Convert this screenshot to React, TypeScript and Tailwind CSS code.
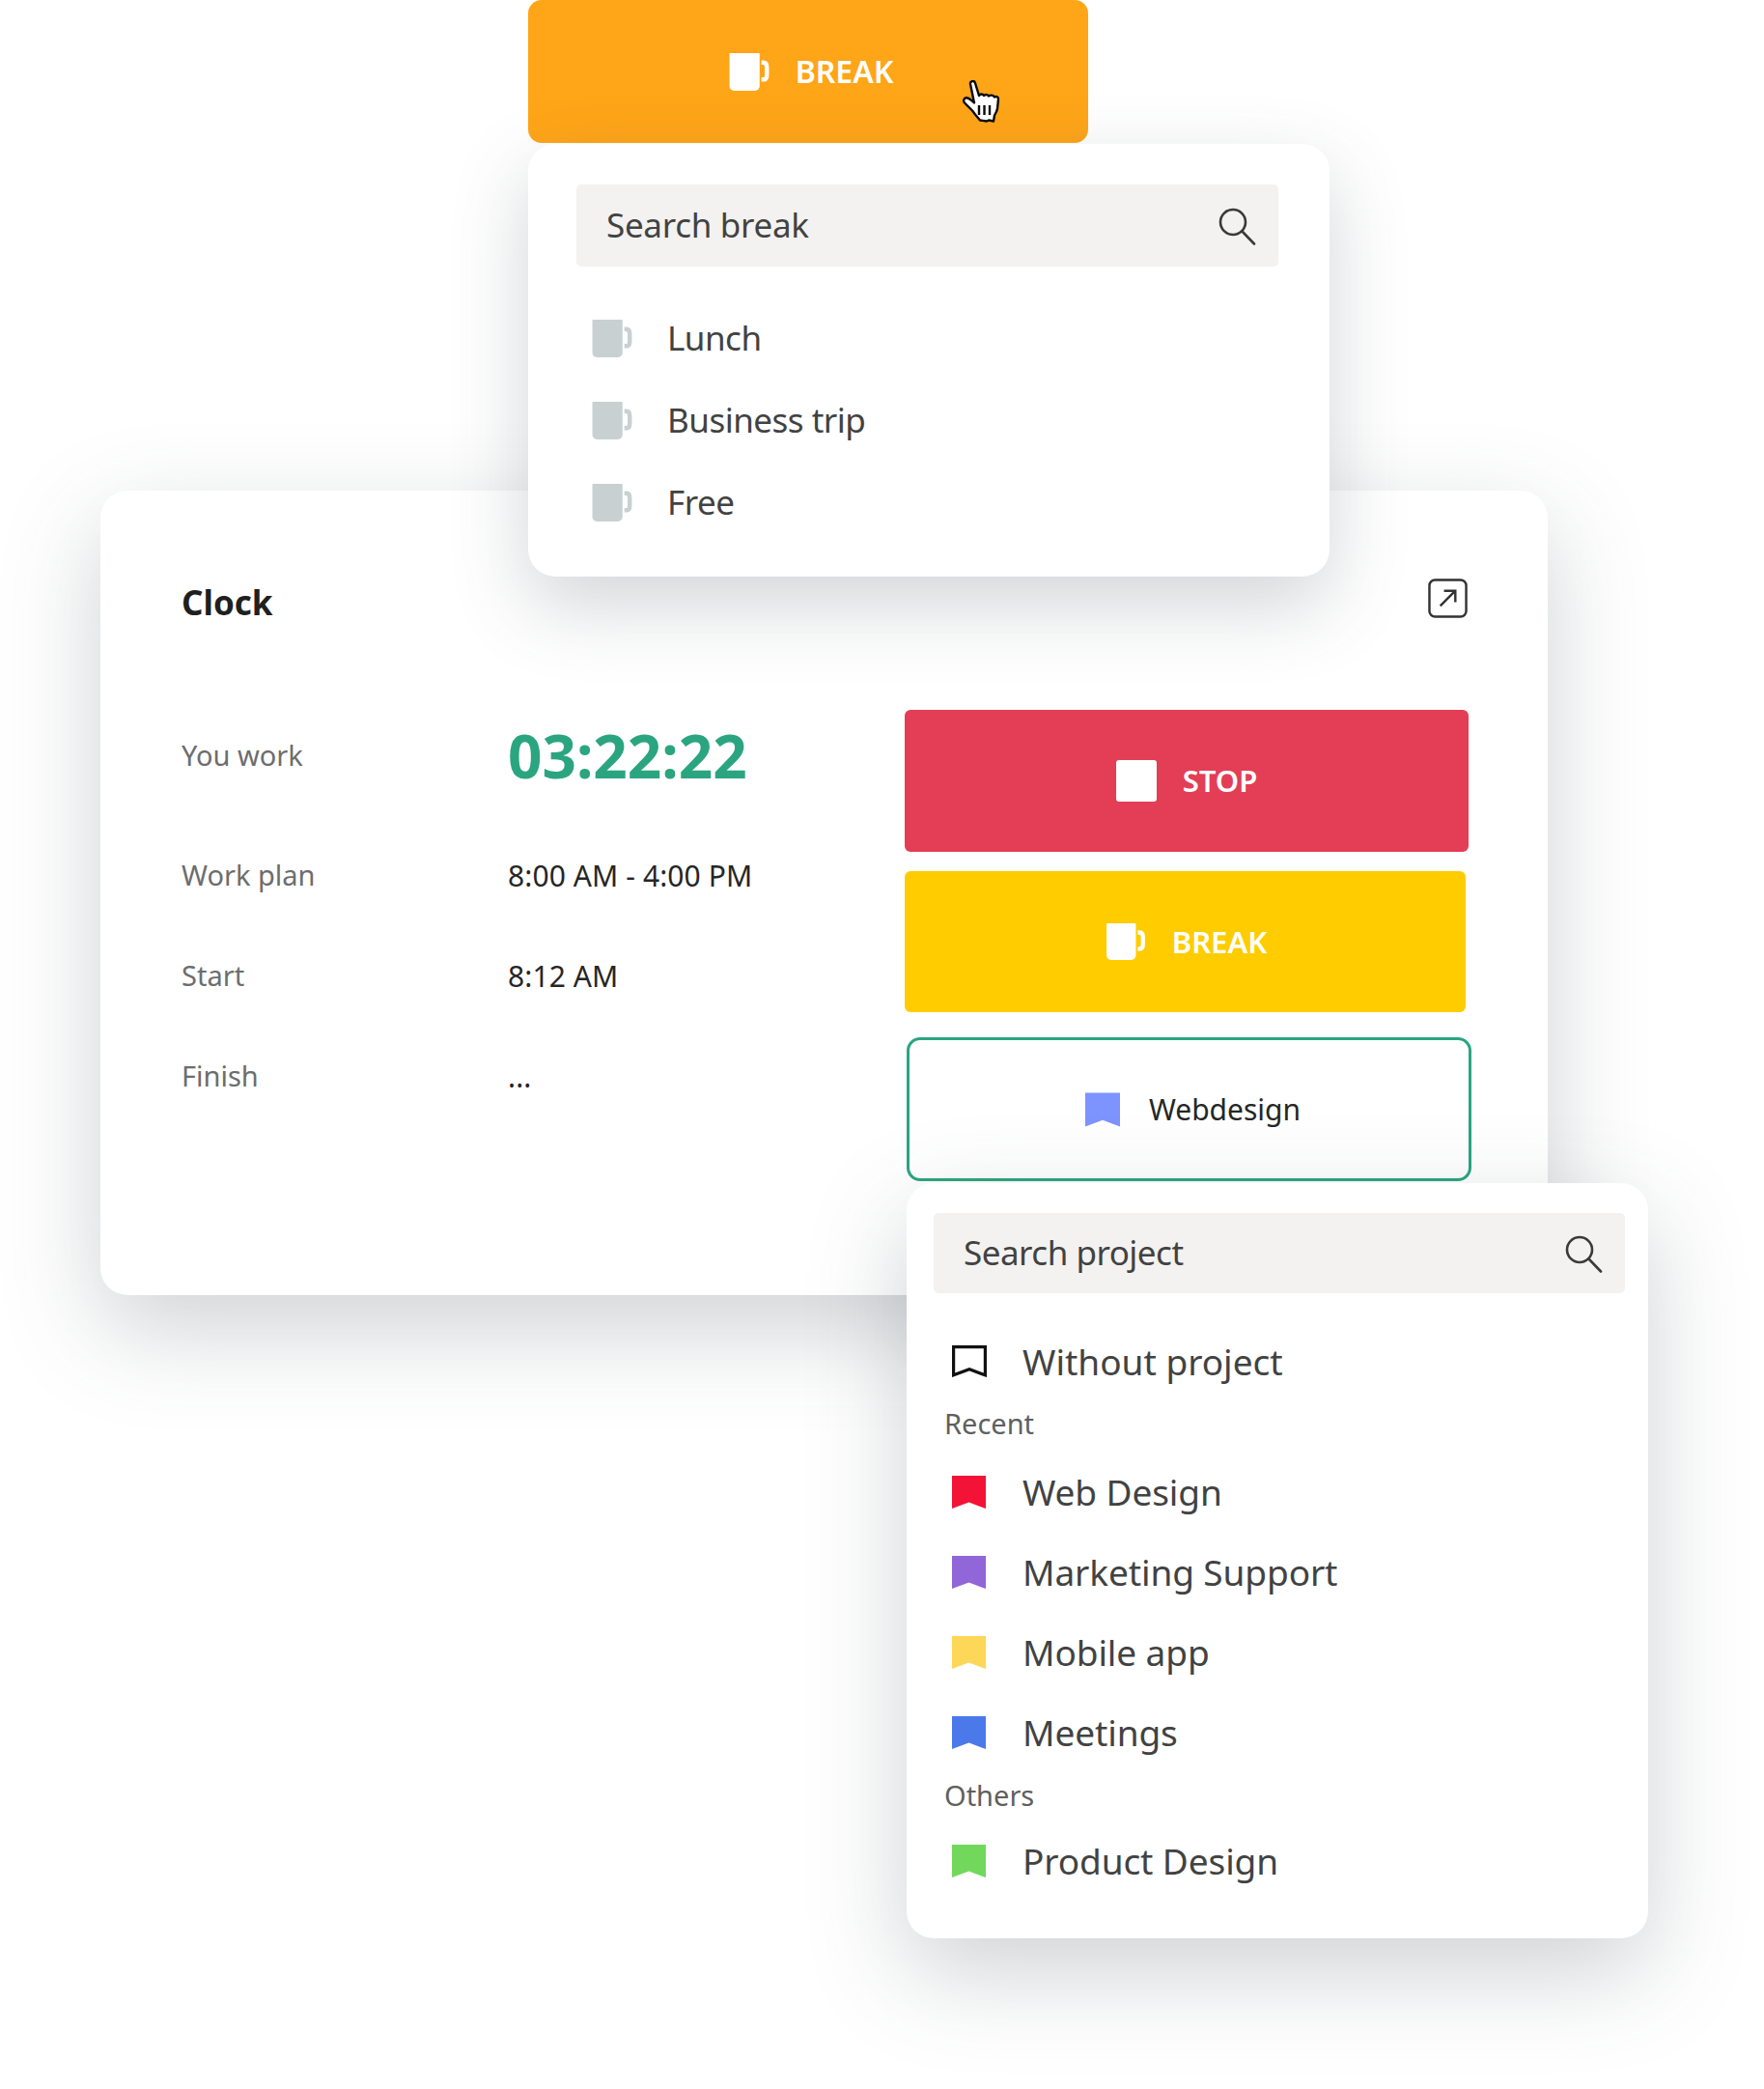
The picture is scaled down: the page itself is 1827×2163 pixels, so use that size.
import type { ReactNode } from "react";

const FONT = "font-['Noto_Sans','Open_Sans',sans-serif]";

function Mug({ className }: { className: string }) {
  return (
    <svg viewBox="0 0 42 40" className={className} fill="currentColor">
      <path d="M1 0h30a1 1 0 0 1 1 1v34a5 5 0 0 1-5 5H5a5 5 0 0 1-5-5V1a1 1 0 0 1 1-1z" />
      <path d="M34 10h2c2.500 0 3.700 2 3.700 5v8c0 3-1.200 5-3.700 5h-2" fill="none" stroke="currentColor" strokeWidth="4.500" />
    </svg>
  );
}

function Flag({ color, className = "w-[35px] h-[34px]" }: { color: string; className?: string }) {
  return (
    <svg viewBox="0 0 35 34" className={`${className} shrink-0`}>
      <path d="M0 0h35v34l-17.500-6.500L0 34z" fill={color} />
    </svg>
  );
}

function SearchGlyph() {
  return (
    <svg viewBox="0 0 40 40" className="w-10 h-10 text-[#3a3a3a]" fill="none" stroke="currentColor" strokeWidth="2.600">
      <circle cx="16" cy="16" r="13" />
      <path d="M25.500 25.500L38 38.500" strokeLinecap="round" />
    </svg>
  );
}

function Hand() {
  return (
    <svg viewBox="0 0 40 44" className="absolute left-[449px] top-[83px] w-10 h-11">
      <path
        d="M9 4c-.5-3 4-4.500 5-1l4 13c1-2 4-2 5 0 1-1.500 4-1.500 5 .5 1.500-1.500 5-1 6 1 1.500-1 4-.5 4 2l-1 10c-.5 3-2 5-3 7l-1 6-5-1-2 1-7-1-5-6-3-4-8-8c-2-2.500 0-6 3-5 2 .5 5 3 7 5z"
        fill="#fff"
        stroke="#0a0a0a"
        strokeWidth="2.400"
        strokeLinejoin="round"
      />
      <path d="M18 26v10M23.500 26v10M29 26v10" stroke="#0a0a0a" strokeWidth="2.400" />
    </svg>
  );
}

function Info({ label, children }: { label: string; children: ReactNode }) {
  return (
    <div className="flex h-[104px] items-center">
      <span className="w-[338px] text-[29px] text-[#6d6d6d]">{label}</span>
      <span className="text-[30px] tracking-[0.1px] text-[#262626]">{children}</span>
    </div>
  );
}

const breaks = ["Lunch", "Business trip", "Free"];
const recent = [
  { name: "Web Design", color: "#f31336" },
  { name: "Marketing Support", color: "#9066d8" },
  { name: "Mobile app", color: "#fdd758" },
  { name: "Meetings", color: "#4c79ea" },
];

function ProjectRow({ name, color }: { name: string; color: string }) {
  return (
    <div className="flex h-[83px] items-center pl-[19px]">
      <Flag color={color} />
      <span className="ml-[38px] text-[37px] tracking-[-0.1px] text-[#424242]">{name}</span>
    </div>
  );
}

export default function App() {
  return (
    <div className={`relative h-[2163px] w-[1827px] overflow-hidden bg-white ${FONT}`}>
      {/* clock */}
      <div className="absolute left-[104px] top-[508px] h-[833px] w-[1499px] rounded-[28px] bg-white pl-[84px] pt-[96px] shadow-[0_35px_100px_rgba(70,80,90,0.26)]">
        <div className="flex items-start justify-between pr-[83px]">
          <h1 className="text-[35px] font-bold leading-[40px] text-[#1f1f1f]">Clock</h1>
          <svg viewBox="0 0 42 42" className="-mt-[5px] h-[41px] w-[41px] text-[#333]" fill="none" stroke="currentColor" strokeWidth="2.500">
            <rect x="1.500" y="1.500" width="39" height="39" rx="6" />
            <path d="M13 29L29 13M17 13h12v12" />
          </svg>
        </div>
        <div className="mt-[91px] flex">
          <div className="-mt-[25px] w-[749px]">
            <div className="flex h-[144px] items-center">
              <span className="w-[338px] text-[29px] text-[#6d6d6d]">You work</span>
              <span className="text-[62px] font-bold text-[#2ba580]">03:22:22</span>
            </div>
            <Info label="Work plan">8:00 AM - 4:00 PM</Info>
            <Info label="Start">8:12 AM</Info>
            <Info label="Finish">...</Info>
          </div>
          <div className="flex flex-col">
            <button className="flex h-[147px] w-[584px] items-center justify-center gap-[27px] rounded-md bg-[#e33e55] text-[31px] font-semibold text-white">
              <span className="h-[43px] w-[42px] rounded-[3px] bg-white" />
              STOP
            </button>
            <button className="mt-[20px] flex h-[146px] w-[581px] items-center justify-center gap-[27px] rounded-md bg-[#ffcc00] pl-[2px] text-[31px] font-semibold text-white">
              <Mug className="h-[38px] w-[42px]" />
              BREAK
            </button>
            <button className="ml-[2px] mt-[26px] flex h-[149px] w-[585px] items-center justify-center gap-[30px] rounded-[14px] border-[3px] border-[#2ba580] bg-white pl-[8px] text-[30px] text-[#262626]">
              <Flag color="#7d93fe" className="h-[36px] w-[36px]" />
              Webdesign
            </button>
          </div>
        </div>
      </div>

      {/* break picker */}
      <div className="absolute left-[547px] top-0 w-[830px]">
        <button className="flex h-[148px] w-[580px] items-center justify-center gap-[27px] rounded-[14px] bg-[#ffa518] pl-[6px] text-[32px] font-semibold text-white">
          <Mug className="h-[39px] w-[42px]" />
          BREAK
        </button>
        <Hand />
        <div className="mt-px h-[448px] rounded-[28px] bg-white pl-[50px] pr-[53px] pt-[42px] shadow-[0_30px_80px_rgba(70,80,90,0.24)]">
          <div className="flex h-[85px] items-center justify-between rounded-[5px] bg-[#f3f2f1] pl-[31px] pr-[23px]">
            <span className="text-[35px] tracking-[-0.3px] text-[#424242]">Search break</span>
            <SearchGlyph />
          </div>
          <div className="mt-[32px] flex flex-col">
            {breaks.map((b) => (
              <div key={b} className="flex h-[85px] items-center pl-[16px]">
                <Mug className="h-[39px] w-[42px] text-[#c8d0d1]" />
                <span className="ml-[36px] text-[35px] tracking-[-0.5px] text-[#424242]">{b}</span>
              </div>
            ))}
          </div>
        </div>
      </div>

      {/* project picker */}
      <div className="absolute left-[939px] top-[1225px] h-[782px] w-[768px] rounded-[28px] bg-white pl-[28px] pr-6 pt-[31px] shadow-[0_35px_100px_rgba(70,80,90,0.26)]">
        <div className="flex h-[83px] items-center justify-between rounded-[5px] bg-[#f3f2f1] pl-[31px] pr-[23px]">
          <span className="text-[35px] tracking-[-0.5px] text-[#424242]">Search project</span>
          <SearchGlyph />
        </div>
        <div className="mt-[29px] flex h-[83px] items-center pl-[19px]">
          <svg viewBox="0 0 36 33" className="h-[33px] w-[36px] shrink-0" fill="none" stroke="#111" strokeWidth="3.200">
            <path d="M1.600 1.600h32.800v29.200l-16.400-6-16.400 6z" />
          </svg>
          <span className="ml-[37px] text-[37px] text-[#424242]">Without project</span>
        </div>
        <div className="mt-[3px] pl-[11px] text-[29px] leading-[40px] text-[#5f5f5f]">Recent</div>
        <div className="mt-[9px]">
          {recent.map((p) => (
            <ProjectRow key={p.name} {...p} />
          ))}
        </div>
        <div className="mt-[4px] pl-[11px] text-[29px] leading-[40px] text-[#5f5f5f]">Others</div>
        <div className="mt-[6px]">
          <ProjectRow name="Product Design" color="#72d85c" />
        </div>
      </div>
    </div>
  );
}
